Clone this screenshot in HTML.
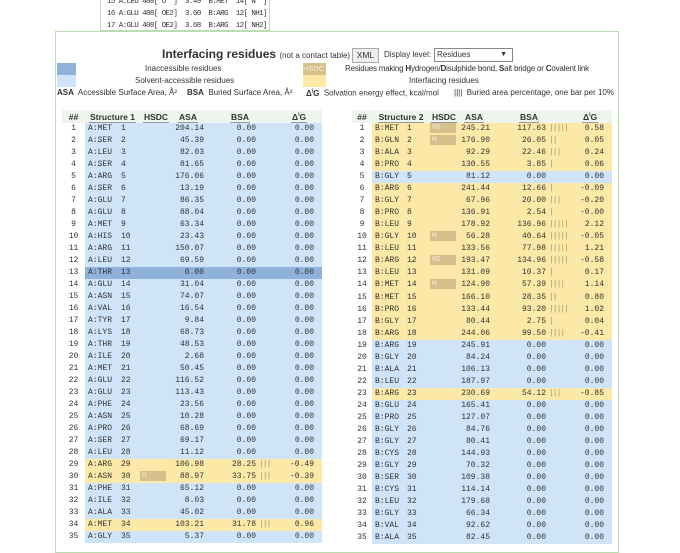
<!DOCTYPE html>
<html><head><meta charset="utf-8"><style>
body{margin:0;width:680px;height:543px;overflow:hidden;background:#fff;font-family:"Liberation Sans",sans-serif;position:relative}
.top{position:absolute;left:100px;top:-4px;width:168px;height:34px;border:1px solid #b9dcb2;border-top:none;font:7.5px "Liberation Mono",monospace;color:#333;overflow:hidden}
.top div{height:12px;line-height:12px;padding-left:6px;white-space:pre;letter-spacing:-0.6px}
.panel{position:absolute;left:55px;top:31px;width:562px;height:520px;border:1px solid #b9dcb2}
.a{position:absolute;white-space:nowrap;color:#333;font-size:8px}
table{position:absolute;border-collapse:collapse;table-layout:fixed;font:8px "Liberation Mono",monospace;color:#333}
td{height:12px;padding:0;line-height:12px;white-space:nowrap;overflow:hidden}
th{font:bold 8.5px "Liberation Sans",sans-serif;color:#333;height:13px;background:#eef5ee;padding:0}
th span{border-bottom:1px solid #999;padding:0 1px}
td:nth-child(1){text-align:center;background:#fff}
td:nth-child(2){padding-left:3px}
td:nth-child(5),td:nth-child(6){text-align:right}
td:nth-child(7){color:#9a9a6a;padding-left:3px;letter-spacing:-1px}
td:nth-child(8){text-align:right;padding-right:8px}
tr.b td:not(:first-child){background:#cfe4f8}
tr.y td:not(:first-child){background:#fce9a8}
tr.d td:not(:first-child){background:#8fb2da}
.h{display:inline-block;width:26px;height:10px;background:#d7bf8e;color:#f5ecd8;font-size:7px;line-height:10px;vertical-align:middle;padding-left:2px;box-sizing:border-box}
</style></head><body>
<div class="top"><div>15 A:LEU 408[ O  ]  3.49  B:MET  14[ N  ]</div><div>16 A:GLU 408[ OE2]  3.60  B:ARG  12[ NH1]</div><div>17 A:GLU 408[ OE2]  3.68  B:ARG  12[ NH2]</div></div>
<div class="panel"></div>
<div class="a" style="left:162px;top:47px;font-size:12px;font-weight:bold;color:#333">Interfacing residues <span style="font-size:8px;font-weight:normal">(not a contact table)</span></div>
<div class="a" style="left:352px;top:48px;width:25px;height:13px;border:1px solid #aaa;background:#eee;text-align:center;line-height:13px;font-size:8.5px">XML</div>
<div class="a" style="left:384px;top:50px">Display level:</div>
<div class="a" style="left:434px;top:48px;width:75px;height:12px;border:1px solid #888;line-height:12px;padding-left:2px">Residues<span style="position:absolute;right:5px;font-size:7px">▼</span></div>
<div class="a" style="left:57px;top:63px;width:19px;height:12px;background:#8fb2da"></div>
<div class="a" style="left:57px;top:75px;width:19px;height:12px;background:#cfe4f8"></div>
<div class="a" style="left:145px;top:64px">Inaccessible residues</div>
<div class="a" style="left:135px;top:76px">Solvent-accessible residues</div>
<div class="a" style="left:303px;top:63px;width:23px;height:12px;background:#d7bf8e;color:#f5ecd8;font-size:7.5px;line-height:12px">HSDC</div>
<div class="a" style="left:303px;top:75px;width:23px;height:12px;background:#fce9a8"></div>
<div class="a" style="left:345px;top:64px;letter-spacing:-0.2px">Residues making <b>H</b>ydrogen/<b>D</b>isulphide bond, <b>S</b>alt bridge or <b>C</b>ovalent link</div>
<div class="a" style="left:409px;top:76px">Interfacing residues</div>
<div class="a" style="left:57px;top:88px"><b>ASA</b>&nbsp; Accessible Surface Area, Å²</div>
<div class="a" style="left:187px;top:88px"><b>BSA</b>&nbsp; Buried Surface Area, Å²</div>
<div class="a" style="left:306px;top:88px"><b>Δ<sup style="font-size:5px">i</sup>G</b>&nbsp; Solvation energy effect, kcal/mol</div>
<div class="a" style="left:454px;top:88px">||||&nbsp; Buried area percentage, one bar per 10%</div>

<table style="left:62px;top:110px;width:260px">
<colgroup><col style="width:23px"><col style="width:36px"><col style="width:19px"><col style="width:32px"><col style="width:32px"><col style="width:52px"><col style="width:20px"><col style="width:46px"></colgroup>
<tr><th><span style="border:0">##</span></th><th colspan="2"><span>Structure 1</span></th><th><span>HSDC</span></th><th><span>ASA</span></th><th colspan="2"><span>BSA</span></th><th><span>Δ<sup style="font-size:5px">i</sup>G</span></th></tr>
<tr class="b"><td>1</td><td>A:MET</td><td>1</td><td></td><td>204.14</td><td>0.00</td><td></td><td>0.00</td></tr>
<tr class="b"><td>2</td><td>A:SER</td><td>2</td><td></td><td>45.39</td><td>0.00</td><td></td><td>0.00</td></tr>
<tr class="b"><td>3</td><td>A:LEU</td><td>3</td><td></td><td>82.03</td><td>0.00</td><td></td><td>0.00</td></tr>
<tr class="b"><td>4</td><td>A:SER</td><td>4</td><td></td><td>81.65</td><td>0.00</td><td></td><td>0.00</td></tr>
<tr class="b"><td>5</td><td>A:ARG</td><td>5</td><td></td><td>176.06</td><td>0.00</td><td></td><td>0.00</td></tr>
<tr class="b"><td>6</td><td>A:SER</td><td>6</td><td></td><td>13.19</td><td>0.00</td><td></td><td>0.00</td></tr>
<tr class="b"><td>7</td><td>A:GLU</td><td>7</td><td></td><td>86.35</td><td>0.00</td><td></td><td>0.00</td></tr>
<tr class="b"><td>8</td><td>A:GLU</td><td>8</td><td></td><td>88.04</td><td>0.00</td><td></td><td>0.00</td></tr>
<tr class="b"><td>9</td><td>A:MET</td><td>9</td><td></td><td>63.34</td><td>0.00</td><td></td><td>0.00</td></tr>
<tr class="b"><td>10</td><td>A:HIS</td><td>10</td><td></td><td>23.43</td><td>0.00</td><td></td><td>0.00</td></tr>
<tr class="b"><td>11</td><td>A:ARG</td><td>11</td><td></td><td>150.07</td><td>0.00</td><td></td><td>0.00</td></tr>
<tr class="b"><td>12</td><td>A:LEU</td><td>12</td><td></td><td>69.59</td><td>0.00</td><td></td><td>0.00</td></tr>
<tr class="d"><td>13</td><td>A:THR</td><td>13</td><td></td><td>0.00</td><td>0.00</td><td></td><td>0.00</td></tr>
<tr class="b"><td>14</td><td>A:GLU</td><td>14</td><td></td><td>31.04</td><td>0.00</td><td></td><td>0.00</td></tr>
<tr class="b"><td>15</td><td>A:ASN</td><td>15</td><td></td><td>74.07</td><td>0.00</td><td></td><td>0.00</td></tr>
<tr class="b"><td>16</td><td>A:VAL</td><td>16</td><td></td><td>16.54</td><td>0.00</td><td></td><td>0.00</td></tr>
<tr class="b"><td>17</td><td>A:TYR</td><td>17</td><td></td><td>9.84</td><td>0.00</td><td></td><td>0.00</td></tr>
<tr class="b"><td>18</td><td>A:LYS</td><td>18</td><td></td><td>68.73</td><td>0.00</td><td></td><td>0.00</td></tr>
<tr class="b"><td>19</td><td>A:THR</td><td>19</td><td></td><td>48.53</td><td>0.00</td><td></td><td>0.00</td></tr>
<tr class="b"><td>20</td><td>A:ILE</td><td>20</td><td></td><td>2.68</td><td>0.00</td><td></td><td>0.00</td></tr>
<tr class="b"><td>21</td><td>A:MET</td><td>21</td><td></td><td>50.45</td><td>0.00</td><td></td><td>0.00</td></tr>
<tr class="b"><td>22</td><td>A:GLU</td><td>22</td><td></td><td>116.52</td><td>0.00</td><td></td><td>0.00</td></tr>
<tr class="b"><td>23</td><td>A:GLU</td><td>23</td><td></td><td>113.43</td><td>0.00</td><td></td><td>0.00</td></tr>
<tr class="b"><td>24</td><td>A:PHE</td><td>24</td><td></td><td>23.56</td><td>0.00</td><td></td><td>0.00</td></tr>
<tr class="b"><td>25</td><td>A:ASN</td><td>25</td><td></td><td>10.28</td><td>0.00</td><td></td><td>0.00</td></tr>
<tr class="b"><td>26</td><td>A:PRO</td><td>26</td><td></td><td>68.69</td><td>0.00</td><td></td><td>0.00</td></tr>
<tr class="b"><td>27</td><td>A:SER</td><td>27</td><td></td><td>69.17</td><td>0.00</td><td></td><td>0.00</td></tr>
<tr class="b"><td>28</td><td>A:LEU</td><td>28</td><td></td><td>11.12</td><td>0.00</td><td></td><td>0.00</td></tr>
<tr class="y"><td>29</td><td>A:ARG</td><td>29</td><td></td><td>106.98</td><td>28.25</td><td>|||</td><td>-0.49</td></tr>
<tr class="y"><td>30</td><td>A:ASN</td><td>30</td><td><span class="h">H</span></td><td>88.97</td><td>33.75</td><td>|||</td><td>-0.39</td></tr>
<tr class="b"><td>31</td><td>A:PHE</td><td>31</td><td></td><td>65.12</td><td>0.00</td><td></td><td>0.00</td></tr>
<tr class="b"><td>32</td><td>A:ILE</td><td>32</td><td></td><td>8.03</td><td>0.00</td><td></td><td>0.00</td></tr>
<tr class="b"><td>33</td><td>A:ALA</td><td>33</td><td></td><td>45.02</td><td>0.00</td><td></td><td>0.00</td></tr>
<tr class="y"><td>34</td><td>A:MET</td><td>34</td><td></td><td>103.21</td><td>31.78</td><td>|||</td><td>0.96</td></tr>
<tr class="b"><td>35</td><td>A:GLY</td><td>35</td><td></td><td>5.37</td><td>0.00</td><td></td><td>0.00</td></tr>
</table>

<table style="left:352px;top:110px;width:260px">
<colgroup><col style="width:20px"><col style="width:35px"><col style="width:23px"><col style="width:28px"><col style="width:32px"><col style="width:56px"><col style="width:22px"><col style="width:44px"></colgroup>
<tr><th><span style="border:0">##</span></th><th colspan="2"><span>Structure 2</span></th><th><span>HSDC</span></th><th><span>ASA</span></th><th colspan="2"><span>BSA</span></th><th><span>Δ<sup style="font-size:5px">i</sup>G</span></th></tr>
<tr class="y"><td>1</td><td>B:MET</td><td>1</td><td><span class="h">HS</span></td><td>245.21</td><td>117.63</td><td>|||||</td><td>0.58</td></tr>
<tr class="y"><td>2</td><td>B:GLN</td><td>2</td><td><span class="h">H</span></td><td>176.90</td><td>26.05</td><td>||</td><td>0.05</td></tr>
<tr class="y"><td>3</td><td>B:ALA</td><td>3</td><td></td><td>92.29</td><td>22.46</td><td>|||</td><td>0.24</td></tr>
<tr class="y"><td>4</td><td>B:PRO</td><td>4</td><td></td><td>130.55</td><td>3.85</td><td>|</td><td>0.06</td></tr>
<tr class="b"><td>5</td><td>B:GLY</td><td>5</td><td></td><td>81.12</td><td>0.00</td><td></td><td>0.00</td></tr>
<tr class="y"><td>6</td><td>B:ARG</td><td>6</td><td></td><td>241.44</td><td>12.66</td><td>|</td><td>-0.09</td></tr>
<tr class="y"><td>7</td><td>B:GLY</td><td>7</td><td></td><td>67.96</td><td>20.00</td><td>|||</td><td>-0.20</td></tr>
<tr class="y"><td>8</td><td>B:PRO</td><td>8</td><td></td><td>136.91</td><td>2.54</td><td>|</td><td>-0.00</td></tr>
<tr class="y"><td>9</td><td>B:LEU</td><td>9</td><td></td><td>178.92</td><td>136.96</td><td>||||||||</td><td>2.12</td></tr>
<tr class="y"><td>10</td><td>B:GLY</td><td>10</td><td><span class="h">H</span></td><td>56.28</td><td>40.64</td><td>||||||||</td><td>-0.05</td></tr>
<tr class="y"><td>11</td><td>B:LEU</td><td>11</td><td></td><td>133.56</td><td>77.98</td><td>||||||</td><td>1.21</td></tr>
<tr class="y"><td>12</td><td>B:ARG</td><td>12</td><td><span class="h">HS</span></td><td>193.47</td><td>134.96</td><td>|||||||</td><td>-0.58</td></tr>
<tr class="y"><td>13</td><td>B:LEU</td><td>13</td><td></td><td>131.09</td><td>10.37</td><td>|</td><td>0.17</td></tr>
<tr class="y"><td>14</td><td>B:MET</td><td>14</td><td><span class="h">H</span></td><td>124.90</td><td>57.39</td><td>||||</td><td>1.14</td></tr>
<tr class="y"><td>15</td><td>B:MET</td><td>15</td><td></td><td>166.10</td><td>28.35</td><td>||</td><td>0.80</td></tr>
<tr class="y"><td>16</td><td>B:PRO</td><td>16</td><td></td><td>133.44</td><td>93.20</td><td>||||||</td><td>1.02</td></tr>
<tr class="y"><td>17</td><td>B:GLY</td><td>17</td><td></td><td>80.44</td><td>2.75</td><td>|</td><td>0.04</td></tr>
<tr class="y"><td>18</td><td>B:ARG</td><td>18</td><td></td><td>244.06</td><td>99.50</td><td>||||</td><td>-0.41</td></tr>
<tr class="b"><td>19</td><td>B:ARG</td><td>19</td><td></td><td>245.91</td><td>0.00</td><td></td><td>0.00</td></tr>
<tr class="b"><td>20</td><td>B:GLY</td><td>20</td><td></td><td>84.24</td><td>0.00</td><td></td><td>0.00</td></tr>
<tr class="b"><td>21</td><td>B:ALA</td><td>21</td><td></td><td>106.13</td><td>0.00</td><td></td><td>0.00</td></tr>
<tr class="b"><td>22</td><td>B:LEU</td><td>22</td><td></td><td>187.97</td><td>0.00</td><td></td><td>0.00</td></tr>
<tr class="y"><td>23</td><td>B:ARG</td><td>23</td><td></td><td>230.69</td><td>54.12</td><td>|||</td><td>-0.85</td></tr>
<tr class="b"><td>24</td><td>B:GLU</td><td>24</td><td></td><td>165.41</td><td>0.00</td><td></td><td>0.00</td></tr>
<tr class="b"><td>25</td><td>B:PRO</td><td>25</td><td></td><td>127.07</td><td>0.00</td><td></td><td>0.00</td></tr>
<tr class="b"><td>26</td><td>B:GLY</td><td>26</td><td></td><td>84.76</td><td>0.00</td><td></td><td>0.00</td></tr>
<tr class="b"><td>27</td><td>B:GLY</td><td>27</td><td></td><td>80.41</td><td>0.00</td><td></td><td>0.00</td></tr>
<tr class="b"><td>28</td><td>B:CYS</td><td>28</td><td></td><td>144.93</td><td>0.00</td><td></td><td>0.00</td></tr>
<tr class="b"><td>29</td><td>B:GLY</td><td>29</td><td></td><td>70.32</td><td>0.00</td><td></td><td>0.00</td></tr>
<tr class="b"><td>30</td><td>B:SER</td><td>30</td><td></td><td>109.38</td><td>0.00</td><td></td><td>0.00</td></tr>
<tr class="b"><td>31</td><td>B:CYS</td><td>31</td><td></td><td>114.14</td><td>0.00</td><td></td><td>0.00</td></tr>
<tr class="b"><td>32</td><td>B:LEU</td><td>32</td><td></td><td>179.68</td><td>0.00</td><td></td><td>0.00</td></tr>
<tr class="b"><td>33</td><td>B:GLY</td><td>33</td><td></td><td>66.34</td><td>0.00</td><td></td><td>0.00</td></tr>
<tr class="b"><td>34</td><td>B:VAL</td><td>34</td><td></td><td>92.62</td><td>0.00</td><td></td><td>0.00</td></tr>
<tr class="b"><td>35</td><td>B:ALA</td><td>35</td><td></td><td>82.45</td><td>0.00</td><td></td><td>0.00</td></tr>
</table>
</body></html>
